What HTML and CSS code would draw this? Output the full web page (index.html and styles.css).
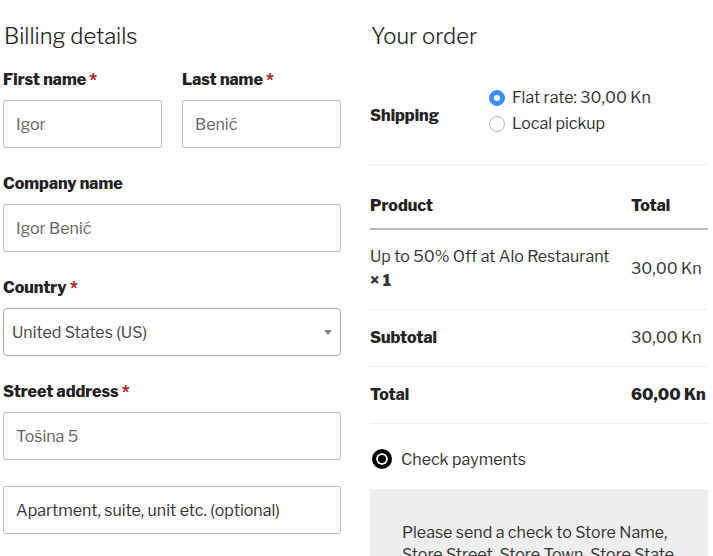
FILE: index.html
```html
<!DOCTYPE html>
<html lang="en">
<head>
  <meta charset="UTF-8" />
  <title>Checkout</title>
  <link rel="stylesheet" href="styles.css">
</head>
<body>
  <div class="checkout">
    <div class="billing">
      <h3>Billing details</h3>
      <div class="row-pair">
        <p class="field">
          <label>First name <abbr>*</abbr></label>
          <input type="text" value="Igor" />
        </p>
        <p class="field">
          <label>Last name <abbr>*</abbr></label>
          <input type="text" value="Benić" />
        </p>
      </div>
      <p class="field">
        <label>Company name</label>
        <input type="text" value="Igor Benić" />
      </p>
      <p class="field">
        <label>Country <abbr>*</abbr></label>
        <span class="select">United States (US)<span class="arrow"></span></span>
      </p>
      <p class="field">
        <label>Street address <abbr>*</abbr></label>
        <input type="text" value="Tošina 5" />
      </p>
      <p class="field">
        <input type="text" class="placeholder" placeholder="Apartment, suite, unit etc. (optional)" />
      </p>
    </div>

    <div class="order">
      <h3>Your order</h3>
      <div class="shipping">
        <span class="th">Shipping</span>
        <ul class="methods">
          <li><span class="radio checked"></span>Flat rate: 30,00 Kn</li>
          <li><span class="radio"></span>Local pickup</li>
        </ul>
      </div>
      <table class="review">
        <thead>
          <tr><th>Product</th><th class="total-col">Total</th></tr>
        </thead>
        <tbody>
          <tr class="item">
            <td>Up to 50% Off at Alo Restaurant <strong>×&nbsp;1</strong></td>
            <td class="total-col">30,00 Kn</td>
          </tr>
          <tr><th>Subtotal</th><td class="total-col">30,00 Kn</td></tr>
          <tr><th>Total</th><th class="total-col">60,00 Kn</th></tr>
        </tbody>
      </table>
      <div class="payment">
        <label class="method"><span class="pay-radio"></span>Check payments</label>
        <div class="pay-box">
          Please send a check to Store Name, Store Street, Store Town, Store State / County, Store Postcode.
        </div>
      </div>
    </div>
  </div>
</body>
</html>
```

FILE: styles.css
```css
body {
  margin: 0;
  font-family: "Libre Franklin", "Liberation Sans", Arial, sans-serif;
  color: #333;
  background: #fff;
  font-size: 16px;
  overflow: hidden;
}
.checkout {
  display: grid;
  grid-template-columns: 338px 338px;
  column-gap: 29px;
  padding-left: 3px;
}
h3 {
  font-size: 22px;
  font-weight: 300;
  margin: 21px 0 19px 1px;
  line-height: 30px;
  color: #222;
}
.row-pair {
  display: grid;
  grid-template-columns: 159px 159px;
  column-gap: 20px;
}
.field {
  margin: 0 0 26px;
}
.field label {
  display: block;
  font-weight: 800;
  font-size: 16px;
  line-height: 20px;
  margin-bottom: 10px;
  color: #222;
}
abbr {
  color: #b22222;
  text-decoration: none;
}
input {
  box-sizing: border-box;
  width: 100%;
  height: 48px;
  border: 1px solid #bbb;
  border-radius: 3px;
  padding: 0 12px;
  font: inherit;
  font-size: 16px;
  color: #666;
  display: block;
}
input::placeholder {
  color: #333;
  opacity: 1;
}
.select {
  box-sizing: border-box;
  display: flex;
  align-items: center;
  height: 48px;
  border: 1px solid #aaa;
  border-radius: 4px;
  padding: 0 8px;
  color: #444;
  position: relative;
}
.arrow {
  position: absolute;
  right: 8px;
  top: 21px;
  border-left: 4px solid transparent;
  border-right: 4px solid transparent;
  border-top: 5px solid #888;
}
.shipping {
  display: flex;
  align-items: center;
  margin-top: 34px;
  padding-bottom: 27px;
  border-bottom: 1px solid #eee;
}
.shipping .th {
  font-weight: 800;
  width: 119px;
  padding-top: 8px;
  color: #222;
}
.methods {
  list-style: none;
  margin: 0;
  padding: 0;
  line-height: 26px;
}
.methods li {
  display: flex;
  align-items: center;
}
.radio {
  width: 14px;
  height: 14px;
  border: 1px solid #bbb;
  border-radius: 50%;
  margin-right: 7px;
  box-sizing: content-box;
}
.radio.checked {
  background: #3d90f0;
  border-color: #3d90f0;
  position: relative;
}
.radio.checked::after {
  content: "";
  position: absolute;
  left: 4px;
  top: 4px;
  width: 6px;
  height: 6px;
  border-radius: 50%;
  background: #fff;
}
.review {
  width: 100%;
  border-collapse: collapse;
}
.review th, .review td {
  text-align: left;
  padding: 0;
  font-size: 16px;
  line-height: 24px;
  color: #333;
}
.review th {
  font-weight: 800;
  color: #222;
}
.review thead th {
  padding: 29px 0 10px;
  border-bottom: 2px solid #bbb;
}
.review tbody td, .review tbody th {
  padding: 16px 0 16px;
  border-bottom: 1px solid #eee;
}
.review tbody tr.item td {
  padding: 15px 0 16px;
}
.review .total-col {
  width: 77px;
}
.review strong {
  font-weight: 800;
}
.payment {
  margin-top: 25px;
}
.method {
  display: flex;
  align-items: center;
  margin-left: 2px;
  color: #333;
}
.pay-radio {
  width: 12px;
  height: 12px;
  border: 4px solid #000;
  border-radius: 50%;
  background: #000;
  box-shadow: inset 0 0 0 2px #fff;
  margin-right: 9px;
}
.pay-box {
  margin-top: 20px;
  background: #eee;
  padding: 33px 32px;
  line-height: 22px;
}
```
